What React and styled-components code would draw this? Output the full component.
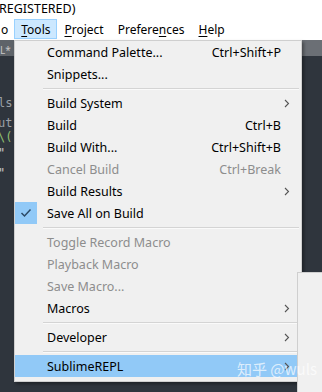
import React from "react";
import styled, { createGlobalStyle } from "styled-components";

const GlobalStyle = createGlobalStyle`
  html, body {
    margin: 0;
    padding: 0;
    background: #2f353d;
  }
  body {
    font-family: "Noto Sans", "Noto Sans CJK SC", sans-serif;
  }
`;

const items = [
  { label: "Command Palette...", key: "Ctrl+Shift+P" },
  { label: "Snippets..." },
  { sep: true },
  { label: "Build System", sub: true },
  { label: "Build", key: "Ctrl+B" },
  { label: "Build With...", key: "Ctrl+Shift+B" },
  { label: "Cancel Build", key: "Ctrl+Break", disabled: true },
  { label: "Build Results", sub: true },
  { label: "Save All on Build", checked: true },
  { sep: true },
  { label: "Toggle Record Macro", disabled: true },
  { label: "Playback Macro", disabled: true },
  { label: "Save Macro...", disabled: true },
  { label: "Macros", sub: true },
  { sep: true },
  { label: "Developer", sub: true },
  { sep: true },
  { label: "SublimeREPL", sub: true, active: true },
];

const Chevron = () => (
  <svg width="6" height="9" viewBox="0 0 6 9">
    <path d="M1 1 L4.5 4.5 L1 8" fill="none" stroke="#555" strokeWidth="1.1" />
  </svg>
);

const Check = () => (
  <svg width="12" height="10" viewBox="0 0 12 10">
    <path d="M1.5 5 L4.5 8 L10.5 1.5" fill="none" stroke="#2c4a66" strokeWidth="1.5" />
  </svg>
);

const App = () => {
  return (
    <>
      <GlobalStyle />
      <Screen>
        <TitleBar>REGISTERED)</TitleBar>
        <MenuBar>
          <TopItem>o</TopItem>
          <TopItem open>
            <u>T</u>ools
          </TopItem>
          <TopItem>
            <u>P</u>roject
          </TopItem>
          <TopItem>
            Prefere<u>n</u>ces
          </TopItem>
          <TopItem>
            <u>H</u>elp
          </TopItem>
        </MenuBar>
        <Editor>
          <TabStrip>
            <TabStub>L*</TabStub>
            <TabFill />
          </TabStrip>
          <Code>
            <CodeLine top={40}>ls</CodeLine>
            <CodeLine top={60}>ut</CodeLine>
            <CodeLine top={74} color="#8fbf6f">\(</CodeLine>
            <CodeLine top={90} color="#c9c9c9">"</CodeLine>
            <CodeLine top={110} color="#c9c9c9">"</CodeLine>
          </Code>
        </Editor>

        <Dropdown>
          {items.map((it, i) =>
            it.sep ? (
              <Separator key={i} />
            ) : (
              <Row key={i} active={it.active}>
                <CheckCell checked={it.checked}>{it.checked && <Check />}</CheckCell>
                <Label disabled={it.disabled}>{it.label}</Label>
                <Shortcut disabled={it.disabled}>{it.key}</Shortcut>
                <ArrowCell>{it.sub && <Chevron />}</ArrowCell>
              </Row>
            )
          )}
        </Dropdown>
        <SubMenu />
        <Watermark>知乎 @wuls</Watermark>
      </Screen>
    </>
  );
};

// styled components

const Screen = styled.div`
  position: relative;
  width: 322px;
  height: 392px;
  overflow: hidden;
  background: #2f353d;
`;

const TitleBar = styled.div`
  height: 18px;
  background: #fff;
  color: #000;
  font-size: 12.5px;
  line-height: 18px;
  margin-left: -1px;
`;

const MenuBar = styled.div`
  display: flex;
  align-items: center;
  height: 22px;
  background: #fff;
  font-size: 12px;
  color: #000;
`;

const TopItem = styled.div`
  height: 20px;
  line-height: 20px;
  padding: 0 6px;
  box-sizing: border-box;
  border: 1px solid ${(p) => (p.open ? "#99d1ff" : "transparent")};
  background: ${(p) => (p.open ? "#cce8ff" : "transparent")};
  &:first-child {
    padding: 0 5px 0 0;
  }
  u {
    text-underline-offset: 2px;
  }
`;

const Editor = styled.div`
  height: 352px;
  background: #2f353d;
`;

const TabStrip = styled.div`
  display: flex;
  height: 16px;
  background: #575c63;
`;

const TabStub = styled.div`
  width: 14px;
  font-size: 10px;
  color: #c8c8c8;
  line-height: 20px;
  background: #5e6369;
`;

const TabFill = styled.div`
  flex: 1;
  background: #6b6f75;
`;

const Code = styled.div`
  position: relative;
  width: 14px;
  height: 200px;
  font-family: "DejaVu Sans Mono", monospace;
  font-size: 12px;
`;

const CodeLine = styled.div`
  position: absolute;
  left: -2px;
  top: ${(p) => p.top}px;
  color: ${(p) => p.color || "#9aa0a6"};
`;

const Dropdown = styled.div`
  position: absolute;
  left: 14px;
  top: 40px;
  width: 288px;
  box-sizing: border-box;
  padding: 0 0 4px;
  background: #f0f0f0;
  border: 1px solid #cfcfcf;
  box-shadow: 2px 2px 3px rgba(0, 0, 0, 0.35);
  font-size: 12.5px;
`;

const Row = styled.div`
  display: flex;
  align-items: center;
  height: 22px;
  background: ${(p) => (p.active ? "#91c9f7" : "transparent")};
`;

const CheckCell = styled.div`
  width: 22px;
  height: 22px;
  display: flex;
  align-items: center;
  justify-content: center;
  background: ${(p) => (p.checked ? "#91c9f7" : "transparent")};
  margin-right: 10px;
`;

const Label = styled.div`
  flex: 1;
  color: ${(p) => (p.disabled ? "#8d8d8d" : "#000")};
`;

const Shortcut = styled.div`
  color: ${(p) => (p.disabled ? "#8d8d8d" : "#000")};
`;

const ArrowCell = styled.div`
  width: 20px;
  box-sizing: border-box;
  display: flex;
  justify-content: flex-start;
  padding-left: 3px;
`;

const Separator = styled.div`
  height: 1px;
  margin: 3px 2px 2px 28px;
  background: #d4d4d4;
  border-bottom: 1px solid #fafafa;
`;

const SubMenu = styled.div`
  position: absolute;
  left: 297px;
  top: 272px;
  width: 40px;
  height: 130px;
  background: #f0f0f0;
  border: 1px solid #cfcfcf;
`;

const Watermark = styled.div`
  position: absolute;
  left: 237px;
  top: 358px;
  font-size: 15px;
  color: rgba(255, 255, 255, 0.7);
  font-family: "Noto Sans CJK SC", "Noto Sans", sans-serif;
`;

export default App;
